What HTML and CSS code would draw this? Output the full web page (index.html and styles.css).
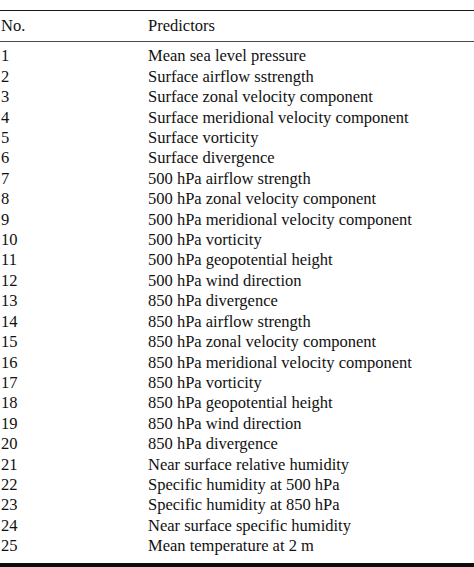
FILE: index.html
```html
<!DOCTYPE html>
<html lang="en">
<head>
<meta charset="utf-8">
<title>Predictors</title>
<link rel="stylesheet" href="styles.css">
</head>
<body>
<div class="wrap">
<table class="tbl">
<thead>
<tr><th class="c-no">No.</th><th class="c-pred">Predictors</th></tr>
</thead>
<tbody>
<tr class="first"><td>1</td><td>Mean sea level pressure</td></tr>
<tr><td>2</td><td>Surface airflow sstrength</td></tr>
<tr><td>3</td><td>Surface zonal velocity component</td></tr>
<tr><td>4</td><td>Surface meridional velocity component</td></tr>
<tr><td>5</td><td>Surface vorticity</td></tr>
<tr><td>6</td><td>Surface divergence</td></tr>
<tr><td>7</td><td>500 hPa airflow strength</td></tr>
<tr><td>8</td><td>500 hPa zonal velocity component</td></tr>
<tr><td>9</td><td>500 hPa meridional velocity component</td></tr>
<tr><td>10</td><td>500 hPa vorticity</td></tr>
<tr><td>11</td><td>500 hPa geopotential height</td></tr>
<tr><td>12</td><td>500 hPa wind direction</td></tr>
<tr><td>13</td><td>850 hPa divergence</td></tr>
<tr><td>14</td><td>850 hPa airflow strength</td></tr>
<tr><td>15</td><td>850 hPa zonal velocity component</td></tr>
<tr><td>16</td><td>850 hPa meridional velocity component</td></tr>
<tr><td>17</td><td>850 hPa vorticity</td></tr>
<tr><td>18</td><td>850 hPa geopotential height</td></tr>
<tr><td>19</td><td>850 hPa wind direction</td></tr>
<tr><td>20</td><td>850 hPa divergence</td></tr>
<tr><td>21</td><td>Near surface relative humidity</td></tr>
<tr><td>22</td><td>Specific humidity at 500 hPa</td></tr>
<tr><td>23</td><td>Specific humidity at 850 hPa</td></tr>
<tr><td>24</td><td>Near surface specific humidity</td></tr>
<tr class="last"><td>25</td><td>Mean temperature at 2 m</td></tr>
</tbody>
</table>
</div>
</body>
</html>
```

FILE: styles.css
```css
html, body {
  margin: 0;
  padding: 0;
  background: #ffffff;
}
.wrap {
  padding-top: 10px;
}
.tbl {
  width: 474px;
  border-collapse: collapse;
  font-family: "Liberation Serif", "Times New Roman", serif;
  font-size: 16.5px;
  line-height: 20.4px;
  color: #111111;
}
.tbl th {
  font-weight: normal;
  text-align: left;
  padding: 5px 0 5px 0;
  border-top: 1.5px solid #1a1a1a;
  border-bottom: 1px solid #4a4a4a;
}
.tbl td {
  padding: 0;
  vertical-align: top;
}
.tbl .c-no {
  width: 147px;
  padding-left: 1px;
}
.tbl td:first-child {
  padding-left: 1px;
}
.tbl tr.first td {
  padding-top: 4px;
}
.tbl tr.last td {
  padding-bottom: 6px;
  border-bottom: 5px solid #0d0d0d;
}
```
